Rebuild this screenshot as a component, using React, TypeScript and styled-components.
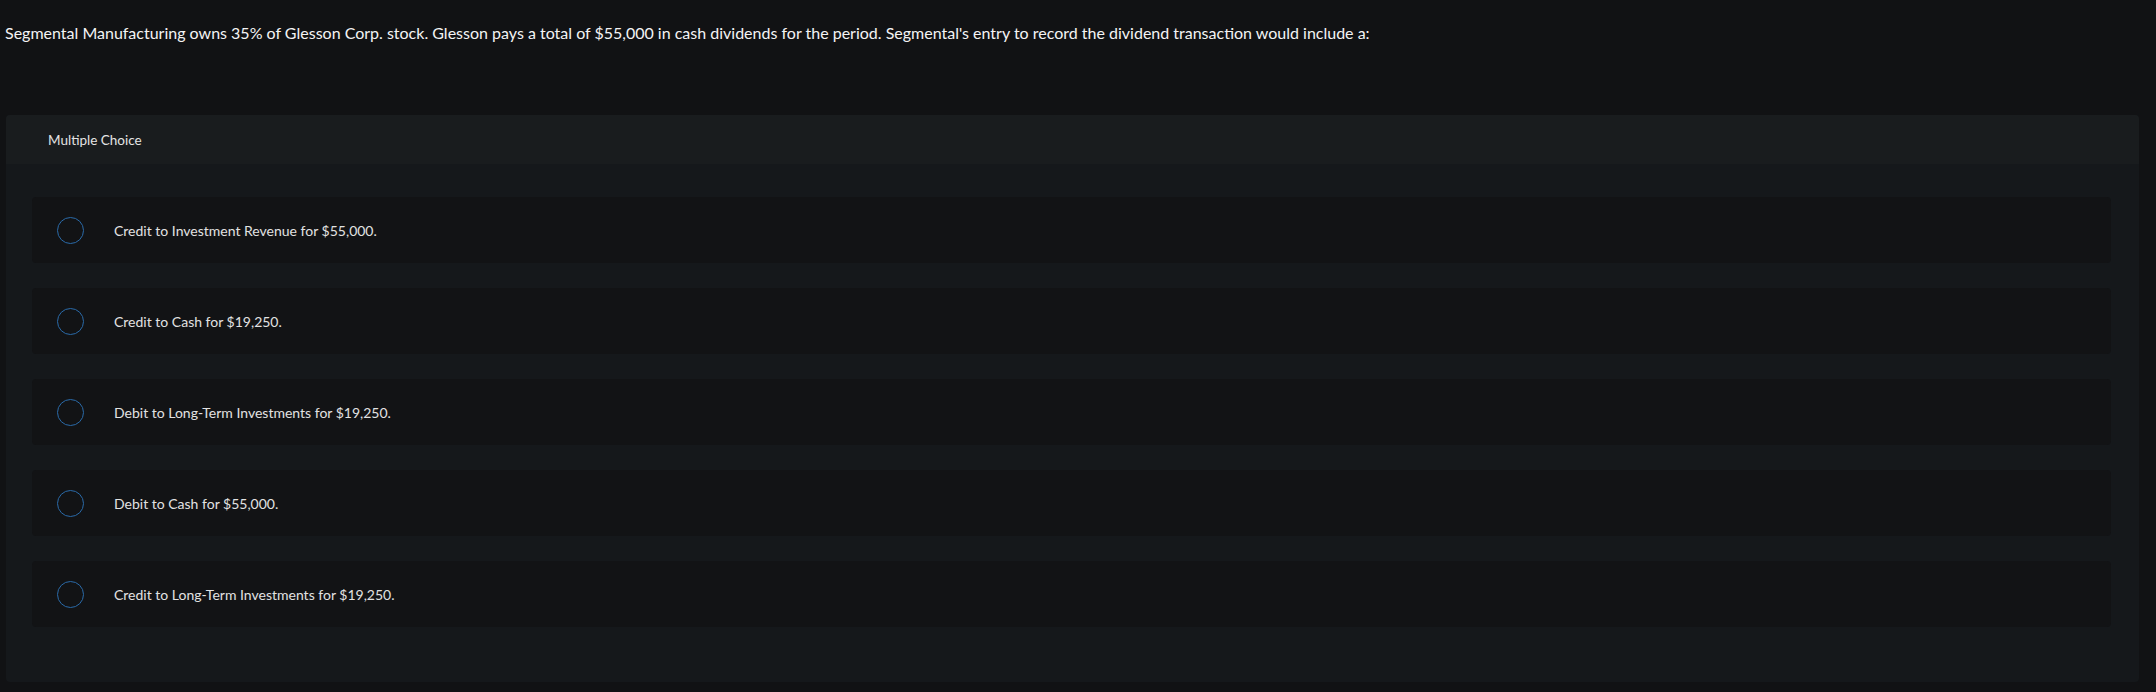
import React from 'react';
import styled, { createGlobalStyle } from 'styled-components';

const options = [
  'Credit to Investment Revenue for $55,000.',
  'Credit to Cash for $19,250.',
  'Debit to Long-Term Investments for $19,250.',
  'Debit to Cash for $55,000.',
  'Credit to Long-Term Investments for $19,250.',
];

const GlobalStyle = createGlobalStyle`
  html, body {
    margin: 0;
    padding: 0;
    background: #111214;
  }
  body {
    font-family: Lato, "Open Sans", "Liberation Sans", sans-serif;
    color: #f2f2f2;
  }
`;

const Page = styled.div`
  padding: 24px 17px 10px 6px;
  min-height: 692px;
  box-sizing: border-box;
`;

const Prompt = styled.p`
  margin: 0 0 0 -1px;
  font-size: 16px;
  line-height: 18px;
  color: #f4f4f4;
`;

const Panel = styled.section`
  margin-top: 73px;
  background: #15181b;
  border-radius: 4px;
  overflow: hidden;
`;

const PanelHead = styled.header`
  height: 49px;
  display: flex;
  align-items: center;
  padding-left: 42px;
  background: #191c1e;
  font-size: 13.5px;
  color: #e4e4e4;
`;

const Choices = styled.div`
  display: flex;
  flex-direction: column;
  gap: 25px;
  padding: 33px 28px 55px 26px;
`;

const Choice = styled.label`
  height: 66px;
  display: flex;
  align-items: center;
  background: #121315;
  border-radius: 4px;
  cursor: pointer;
`;

const Radio = styled.span`
  width: 25px;
  height: 25px;
  margin-left: 25px;
  border: 1.5px solid #2a6aa8;
  border-radius: 50%;
  flex: none;
`;

const ChoiceText = styled.span`
  margin-left: 30px;
  font-size: 14px;
  color: #e2e2e2;
`;

export default function App() {
  return (
    <>
      <GlobalStyle />
      <Page>
        <Prompt>
          Segmental Manufacturing owns 35% of Glesson Corp. stock. Glesson pays a total of
          $55,000 in cash dividends for the period. Segmental's entry to record the dividend
          transaction would include a:
        </Prompt>
        <Panel>
          <PanelHead>Multiple Choice</PanelHead>
          <Choices>
            {options.map((o) => (
              <Choice key={o}>
                <Radio />
                <ChoiceText>{o}</ChoiceText>
              </Choice>
            ))}
          </Choices>
        </Panel>
      </Page>
    </>
  );
}
